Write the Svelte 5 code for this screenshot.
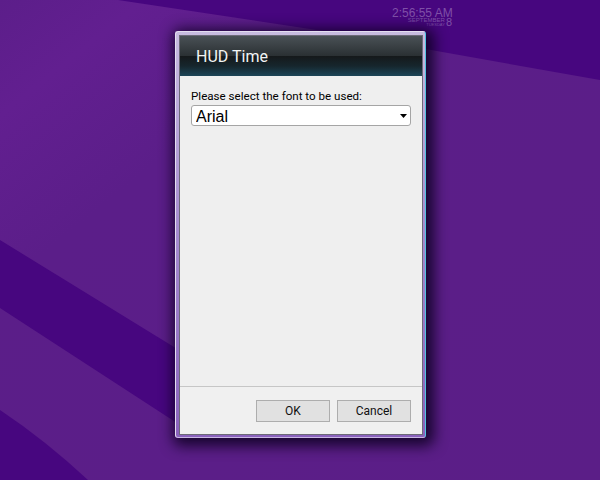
<script>
  let font = $state("Arial");
  const fonts = ["Arial", "Tahoma", "Verdana"];
</script>

<div class="desktop">
  <svg class="wallpaper" viewBox="0 0 600 480" aria-hidden="true">
    <defs>
      <linearGradient id="sheen" x1="0" y1="0" x2="1" y2="1">
        <stop offset="0" stop-color="#5c1e8a" />
        <stop offset="0.12" stop-color="#621f90" />
        <stop offset="0.3" stop-color="#5b1e89" />
        <stop offset="1" stop-color="#5b1e87" />
      </linearGradient>
    </defs>
    <rect width="600" height="480" fill="url(#sheen)" />
    <path d="M118 0 L330 32 L600 80 L600 0 Z" fill="#47067f" />
    <path d="M0 240 L200 363 L200 425 L180 425 L0 308 Z" fill="#47067f" />
    <path d="M0 410 Q45 440 88 480 L0 480 Z" fill="#47067f" />
  </svg>

  <div class="clock">
    <div class="time">2:56:55 AM</div>
    <div class="date">
      <div class="date-words">
        <span class="month">SEPTEMBER</span>
        <span class="weekday">TUESDAY</span>
      </div>
      <span class="day">8</span>
    </div>
  </div>

  <div class="window">
    <div class="client">
      <header>HUD Time</header>
      <main>
        <label for="font">Please select the font to be used:</label>
        <div class="select-wrap">
          <select id="font" bind:value={font}>
            {#each fonts as f}
              <option value={f}>{f}</option>
            {/each}
          </select>
          <svg class="arrow" viewBox="0 0 7 4" aria-hidden="true"><path d="M0 0h7L3.5 4z" /></svg>
        </div>
      </main>
      <footer>
        <button>OK</button>
        <button>Cancel</button>
      </footer>
    </div>
  </div>
</div>

<style>
  :global(body) {
    margin: 0;
    background: #5b1e87;
  }
  .desktop {
    position: relative;
    width: 600px;
    height: 480px;
    overflow: hidden;
    font-family: Roboto, "Open Sans", sans-serif;
  }
  .wallpaper {
    position: absolute;
    inset: 0;
    width: 600px;
    height: 480px;
  }
  .clock {
    position: absolute;
    left: 392px;
    top: 8px;
    width: 60px;
    color: #7f50a8;
    font-family: "Liberation Sans", Arial, sans-serif;
    text-align: right;
  }
  .time {
    font-size: 12px;
    line-height: 10px;
    white-space: nowrap;
  }
  .date {
    display: flex;
    justify-content: flex-end;
    gap: 1px;
  }
  .date-words {
    display: flex;
    flex-direction: column;
  }
  .month {
    font-size: 6px;
    line-height: 5px;
  }
  .weekday {
    font-size: 4px;
    line-height: 4px;
  }
  .day {
    font-size: 11px;
    line-height: 9px;
  }
  .window {
    position: absolute;
    left: 175px;
    top: 31px;
    width: 251px;
    height: 407px;
    box-sizing: border-box;
    padding: 3px 2px 2px 3px;
    border: 1px solid #e4dff0;
    border-right-color: #4fc3e0;
    border-bottom-color: #c9b6e4;
    border-radius: 3px;
    background: linear-gradient(#c8bce0, #a58bd0 50%, #8a62bd);
    box-shadow: 3px 3px 14px 5px rgba(12, 0, 30, 0.85);
  }
  .client {
    display: flex;
    flex-direction: column;
    height: 100%;
    box-sizing: border-box;
    border: 1px solid #6d6a78;
    background: #efefef;
  }
  header {
    height: 40px;
    box-sizing: border-box;
    padding-left: 16px;
    display: flex;
    align-items: center;
    color: #f2f4f4;
    font-size: 16px;
    background: linear-gradient(#4a5156, #2a3033 50%, #15191b 51%, #16262d 75%, #1c4557);
  }
  main {
    flex: 1;
    padding: 12px 11px 0 11px;
    display: flex;
    flex-direction: column;
  }
  label {
    color: #000;
    font-size: 11.6px;
    line-height: 17px;
  }
  .select-wrap {
    position: relative;
    height: 21px;
  }
  select {
    appearance: none;
    width: 100%;
    height: 21px;
    box-sizing: border-box;
    margin: 0;
    padding: 1px 0 0 4px;
    border: 1px solid #a5a5a5;
    border-radius: 3px;
    background: #fff;
    color: #000;
    font-family: "Liberation Sans", Arial, sans-serif;
    font-size: 16px;
  }
  .arrow {
    position: absolute;
    right: 4px;
    top: 9px;
    width: 7px;
    height: 4px;
  }
  footer {
    height: 48px;
    box-sizing: border-box;
    border-top: 1px solid #c6c6c6;
    background: #f0f0f0;
    padding: 13px 11px 0 0;
    display: flex;
    justify-content: flex-end;
    align-items: flex-start;
    gap: 7px;
  }
  button {
    width: 74px;
    height: 22px;
    box-sizing: border-box;
    padding: 0;
    border: 1px solid #adadad;
    background: #e1e1e1;
    color: #111;
    font-family: inherit;
    font-size: 12px;
  }
</style>
